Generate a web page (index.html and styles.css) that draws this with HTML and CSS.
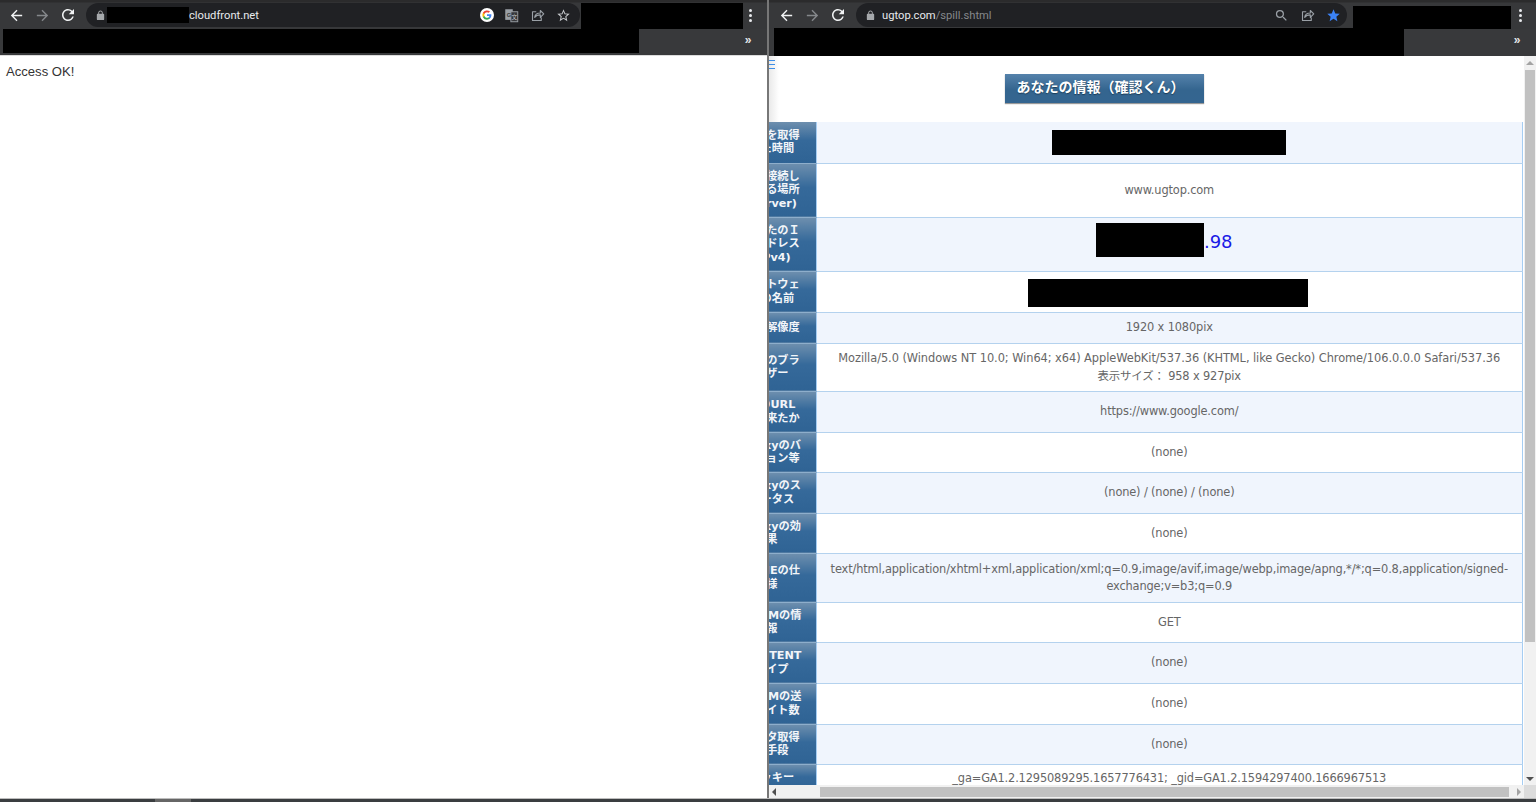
FILE: index.html
```html
<!DOCTYPE html>
<html lang="ja">
<head>
<meta charset="utf-8">
<title>Access check</title>
<link rel="stylesheet" href="styles.css">
</head>
<body>
<svg class="sprite" aria-hidden="true">
  <defs>
    <symbol id="i-back" viewBox="0 0 24 24"><path d="M20 11H7.83l5.59-5.59L12 4l-8 8 8 8 1.41-1.41L7.83 13H20v-2z"/></symbol>
    <symbol id="i-fwd" viewBox="0 0 24 24"><path d="M4 11h12.17l-5.59-5.59L12 4l8 8-8 8-1.41-1.41L16.17 13H4v-2z"/></symbol>
    <symbol id="i-reload" viewBox="0 0 24 24"><path d="M17.65 6.35A7.958 7.958 0 0 0 12 4c-4.42 0-7.99 3.58-7.99 8s3.57 8 7.99 8c3.73 0 6.84-2.55 7.73-6h-2.08A5.99 5.99 0 0 1 12 18c-3.31 0-6-2.69-6-6s2.69-6 6-6c1.66 0 3.14.69 4.22 1.78L13 11h7V4l-2.35 2.35z"/></symbol>
    <symbol id="i-lock" viewBox="0 0 24 24"><path d="M18 8h-1V6c0-2.76-2.24-5-5-5S7 3.24 7 6v2H6c-1.1 0-2 .9-2 2v10c0 1.1.9 2 2 2h12c1.1 0 2-.9 2-2V10c0-1.1-.9-2-2-2zM9 6c0-1.66 1.34-3 3-3s3 1.34 3 3v2H9V6z"/></symbol>
    <symbol id="i-star" viewBox="0 0 24 24"><path d="M22 9.24l-7.19-.62L12 2 9.19 8.63 2 9.24l5.46 4.73L5.82 21 12 17.27 18.18 21l-1.63-7.03L22 9.24zM12 15.4l-3.76 2.27 1-4.28-3.32-2.88 4.38-.38L12 6.1l1.71 4.04 4.38.38-3.32 2.88 1 4.28L12 15.4z"/></symbol>
    <symbol id="i-starfill" viewBox="0 0 24 24"><path d="M12 17.27 18.18 21l-1.63-7.03L22 9.24l-7.19-.62L12 2 9.19 8.63 2 9.24l5.46 4.73L5.82 21z"/></symbol>
    <symbol id="i-search" viewBox="0 0 24 24"><path d="M15.5 14h-.79l-.28-.27A6.47 6.47 0 0 0 16 9.5 6.5 6.5 0 1 0 9.5 16c1.61 0 3.09-.59 4.23-1.57l.27.28v.79l5 4.99L20.49 19l-4.99-5zm-6 0C7.01 14 5 11.99 5 9.5S7.01 5 9.5 5 14 7.01 14 9.5 11.99 14 9.5 14z"/></symbol>
    <symbol id="i-share" viewBox="0 0 24 24"><path class="line" d="M10 6H4v14h14v-5M7.5 15c.5-4.5 4-7 9-7V4l5.500 5.500-5.500 5.500v-4c-4 0-7 1-9 4z"/></symbol>
    <symbol id="i-google" viewBox="0 0 24 24">
      <circle cx="12" cy="12" r="12" fill="#fff"/>
      <path d="M19.500 12.200c0-.6-.05-1.100-.15-1.600H12v3h4.200a3.600 3.600 0 0 1-1.550 2.350v2h2.500c1.500-1.350 2.350-3.400 2.350-5.750z" fill="#4285f4"/>
      <path d="M12 20c2.100 0 3.850-.7 5.150-1.900l-2.500-2c-.7.500-1.600.75-2.650.75-2 0-3.750-1.350-4.350-3.200H5v2A8 8 0 0 0 12 20z" fill="#34a853"/>
      <path d="M7.650 13.650a4.800 4.800 0 0 1 0-3.300v-2H5a8 8 0 0 0 0 7.300z" fill="#fbbc05"/>
      <path d="M12 7.150c1.150 0 2.150.4 2.950 1.150l2.200-2.200A8 8 0 0 0 5 8.350l2.650 2c.6-1.850 2.350-3.200 4.350-3.200z" fill="#ea4335"/>
    </symbol>
    <symbol id="i-translate" viewBox="0 0 24 24">
      <rect x="2" y="2" width="12" height="17" fill="#9aa0a6"/>
      <rect x="11" y="6" width="11" height="16" fill="#35363a" stroke="#9aa0a6" stroke-width="1.500"/>
      <text x="8" y="14" class="tr-a">G</text>
      <text x="16.500" y="18" class="tr-b">文</text>
    </symbol>
  </defs>
</svg>

<div class="desktop">
  <section class="window window-left">
    <header class="chrome">
      <div class="toolbar">
        <span class="btn"><svg class="ico"><use href="#i-back"/></svg></span>
        <span class="btn dim"><svg class="ico"><use href="#i-fwd"/></svg></span>
        <span class="btn"><svg class="ico ico-reload"><use href="#i-reload"/></svg></span>
        <div class="omnibox omnibox-left">
          <svg class="lock"><use href="#i-lock"/></svg>
          <span class="redact redact-host"></span>
          <span class="url">cloudfront.net</span>
          <span class="omni-icons">
            <svg class="act act-g"><use href="#i-google"/></svg>
            <svg class="act"><use href="#i-translate"/></svg>
            <svg class="act act-grey"><use href="#i-share"/></svg>
            <svg class="act act-light"><use href="#i-star"/></svg>
          </span>
        </div>
        <span class="redact redact-ext-left"></span>
        <span class="kebab"><i></i><i></i><i></i></span>
      </div>
      <div class="bookmarks bookmarks-left">
        <span class="redact redact-marks-left"></span>
        <span class="chev">»</span>
      </div>
    </header>
    <main class="page-left">Access OK!</main>
  </section>

  <div class="divider"></div>

  <section class="window window-right">
    <header class="chrome">
      <div class="toolbar toolbar-right">
        <span class="btn"><svg class="ico"><use href="#i-back"/></svg></span>
        <span class="btn dim"><svg class="ico"><use href="#i-fwd"/></svg></span>
        <span class="btn"><svg class="ico ico-reload"><use href="#i-reload"/></svg></span>
        <div class="omnibox omnibox-right">
          <svg class="lock"><use href="#i-lock"/></svg>
          <span class="url url-right">ugtop.com<span class="url-path">/spill.shtml</span></span>
          <span class="omni-icons omni-icons-right">
            <svg class="act act-grey-fill"><use href="#i-search"/></svg>
            <svg class="act act-grey"><use href="#i-share"/></svg>
            <svg class="act act-blue"><use href="#i-starfill"/></svg>
          </span>
        </div>
        <span class="redact redact-ext-right"></span>
        <span class="kebab kebab-right"><i></i><i></i><i></i></span>
      </div>
      <div class="bookmarks bookmarks-right">
        <span class="redact redact-marks-right"></span>
        <span class="chev">»</span>
      </div>
    </header>

    <div class="viewport">
      <div class="scroller">
        <span class="menu-stub"></span>
        <div class="content">
          <h1 class="title">あなたの情報（確認くん）</h1>
          <table class="info">
            <tbody>
              <tr class="h41 alt"><th>情報を取得<br>した時間</th><td><span class="redact redact-time"></span></td></tr>
              <tr class="h54"><th>現在接続し<br>ている場所<br>(server)</th><td>www.ugtop.com</td></tr>
              <tr class="h54 alt"><th>あなたのＩ<br>Ｐアドレス<br>(IPv4)</th><td class="ip-cell"><span class="redact redact-ip"></span><span class="ip">.98</span></td></tr>
              <tr class="h41"><th>ソフトウェ<br>アの名前</th><td><span class="redact redact-host-name"></span></td></tr>
              <tr class="h31 alt"><th>画面解像度</th><td>1920 x 1080pix</td></tr>
              <tr class="h48"><th>貴方のブラ<br>ウザー</th><td><span class="ua">Mozilla/5.0 (Windows NT 10.0; Win64; x64) AppleWebKit/537.36 (KHTML, like Gecko) Chrome/106.0.0.0 Safari/537.36</span><br>表示サイズ： 958 x 927pix</td></tr>
              <tr class="h41 alt"><th>どのURL<br>から来たか</th><td>https://www.google.com/</td></tr>
              <tr class="h40"><th>Proxyのバ<br>ージョン等</th><td>(none)</td></tr>
              <tr class="h41 alt"><th>Proxyのス<br>テータス</th><td>(none) / (none) / (none)</td></tr>
              <tr class="h40"><th>Proxyの効<br>果</th><td>(none)</td></tr>
              <tr class="h49 alt"><th>MIMEの仕<br>様</th><td>text/html,application/xhtml+xml,application/xml;q=0.9,image/avif,image/webp,image/apng,*/*;q=0.8,application/signed-exchange;v=b3;q=0.9</td></tr>
              <tr class="h40"><th>FORMの情<br>報</th><td>GET</td></tr>
              <tr class="h41 alt"><th>CONTENT<br>タイプ</th><td>(none)</td></tr>
              <tr class="h41"><th>FORMの送<br>信バイト数</th><td>(none)</td></tr>
              <tr class="h40 alt"><th>データ取得<br>の手段</th><td>(none)</td></tr>
              <tr class="h28"><th>クッキー</th><td>_ga=GA1.2.1295089295.1657776431; _gid=GA1.2.1594297400.1666967513</td></tr>
            </tbody>
          </table>
        </div>
      </div>
      <div class="vbar">
        <span class="arrow arrow-up"></span>
        <span class="vthumb"></span>
        <span class="arrow arrow-down"></span>
      </div>
      <div class="hbar">
        <span class="arrow arrow-left"></span>
        <span class="hthumb"></span>
        <span class="arrow arrow-right"></span>
      </div>
      <div class="corner"></div>
    </div>
  </section>
</div>

<footer class="taskbar"><span class="task-thumb"></span></footer>
</body>
</html>
```
FILE: styles.css
```css
* { box-sizing: border-box; }
html, body { margin: 0; padding: 0; height: 100%; overflow: hidden; }
body {
  width: 1536px;
  height: 802px;
  display: flex;
  flex-direction: column;
  background: #fff;
  font-family: "DejaVu Sans", "Noto Sans CJK JP", sans-serif;
}
.sprite { width: 0; height: 0; position: absolute; }
.line { fill: none; stroke: currentColor; stroke-width: 1.8; stroke-linejoin: round; }
.tr-a { font: bold 9px "Liberation Sans", sans-serif; fill: #35363a; text-anchor: middle; }
.tr-b { font: 9px "Noto Sans CJK SC", sans-serif; fill: #c4c7ca; text-anchor: middle; }

.desktop { flex: 1; min-height: 0; display: flex; }
.window { display: flex; flex-direction: column; min-width: 0; }
.window-left { width: 767px; }
.window-right { width: 767px; }
.divider { width: 2px; background: #777; }
.taskbar {
  height: 4px;
  background: #3a3d40;
  border-top: 1px solid #bdbdbd;
  display: flex;
  padding-left: 155px;
}
.task-thumb { width: 36px; background: #666; }

.chrome { height: 56px; flex: none; background: #38393b; display: flex; flex-direction: column; }
.toolbar {
  height: 29px;
  display: flex;
  align-items: flex-start;
  padding: 3px 0 0 3px;
  background: linear-gradient(#2b2b2c 0, #2b2b2c 2px, #37383a 3px);
}
.toolbar-right { padding-left: 4px; }
.btn { width: 26px; height: 24px; display: flex; align-items: center; justify-content: center; color: #f1f3f4; }
.btn.dim { color: #85888b; }
.ico { width: 17px; height: 17px; fill: currentColor; }
.ico-reload { width: 18px; height: 18px; }

.omnibox {
  height: 24px;
  margin-left: 5px;
  border-radius: 12px;
  background: #202124;
  display: flex;
  align-items: center;
  padding-left: 9px;
  color: #e8eaed;
}
.omnibox-left { width: 494px; }
.omnibox-right { width: 491px; }
.lock { width: 11px; height: 11px; fill: #a5a8ab; flex: none; }
.redact { background: #000; display: block; flex: none; }
.redact-host { width: 82px; height: 16px; margin-left: 1px; }
.url { font: 11.2px Roboto, sans-serif; color: #e8eaed; white-space: nowrap; }
.url-right { margin-left: 6px; }
.url-path { color: #85888b; }
.omni-icons { margin-left: auto; display: flex; align-items: center; gap: 11px; padding-right: 9px; }
.omni-icons-right { padding-right: 6px; }
.act { width: 15px; height: 15px; color: #9aa0a6; fill: #9aa0a6; }
.act-g { width: 14px; height: 14px; margin-right: -1px; margin-left: 1px; }
.act-light { fill: #c6c9cc; }
.act-blue { fill: #3b82f6; }

.redact-ext-left { width: 162px; height: 26px; margin-left: 1px; }
.redact-ext-right { width: 158px; height: 23px; margin: 3px 0 0 6px; }
.kebab { width: 14px; height: 24px; display: flex; flex-direction: column; align-items: center; justify-content: center; gap: 2px; }
.kebab-right { margin-left: 2px; }
.kebab i { width: 3px; height: 3px; border-radius: 50%; background: #e8eaed; display: block; flex: none; }

.bookmarks { flex: 1; display: flex; align-items: flex-start; }
.bookmarks-left { padding-left: 3px; border-bottom: 1px solid #dcdcdc; }
.bookmarks-right { padding-left: 5px; }
.redact-marks-left { width: 636px; height: 24px; }
.redact-marks-right { width: 630px; height: 28px; margin-top: -1px; }
.chev { margin-left: auto; width: 38px; text-align: center; color: #e3e5e8; font: bold 12px "Liberation Sans", sans-serif; line-height: 22px; }

.page-left {
  flex: 1;
  padding: 7px 6px;
  font: 13.1px/17px "Liberation Sans", sans-serif;
  color: #333;
  background: #fff;
}

.viewport {
  flex: 1;
  min-height: 0;
  display: grid;
  grid-template-columns: 1fr 12px;
  grid-template-rows: 1fr 13px;
  background: #fff;
}
.scroller { overflow: hidden; position: relative; min-width: 0; min-height: 0; }
.scroller::before {
  content: "";
  position: absolute;
  left: 0; top: 0; bottom: 0;
  width: 10px;
  background: linear-gradient(to right, #e4e4e4, #fff);
  opacity: .8;
}
.menu-stub {
  position: absolute;
  left: 0; top: 4px;
  width: 6px; height: 9px;
  background: repeating-linear-gradient(#3f8fe8 0, #3f8fe8 1px, transparent 1px, transparent 4px);
}
.content { width: 799px; margin-left: -45px; padding-top: 18px; position: relative; }
.title {
  width: 199px;
  height: 29px;
  margin: 0 0 19px 281px;
  padding-right: 8px;
  font: bold 14px/25px "Noto Sans CJK JP", sans-serif;
  color: #fff;
  text-align: center;
  background: linear-gradient(#5582ab, #34658f 55%, #346590);
  box-shadow: 0 1px 1px #999;
  text-shadow: 0 1px 1px #1c3c58;
}
.info { border-collapse: collapse; table-layout: fixed; width: 799px; }
.info th {
  width: 92px;
  padding: 0 0 0 4px;
  font: bold 11.2px/13.5px "DejaVu Sans", "Noto Sans CJK JP", sans-serif;
  color: #f2f5f9;
  text-align: center;
  background: linear-gradient(#6e8fae, #35699a 45%, #2f6394);
  border-bottom: 1px solid #8eaecb;
  white-space: nowrap;
}
.info td {
  padding: 1px 8px 0;
  font: 11.4px/17.5px "DejaVu Sans", "Noto Sans CJK JP", sans-serif;
  letter-spacing: -.15px;
  color: #666;
  text-align: center;
  vertical-align: middle;
  background: #fff;
  border-bottom: 1px solid #b4d2ee;
  border-left: 1px solid #a6cdf2;
  border-right: 1px solid #a6cdf2;
}
.info tr.alt td { background: #f0f5fd; }
.info td.ip-cell { padding-top: 0; padding-bottom: 4px; }
.ua { letter-spacing: -.06px; }
.h28 { height: 28px; }
.h31 { height: 31px; }
.h40 { height: 40px; }
.h41 { height: 41px; }
.h48 { height: 48px; }
.h49 { height: 49px; }
.h54 { height: 54px; }
.redact-time { width: 234px; height: 25px; margin: 0 auto; }
.redact-ip { display: inline-block; width: 108px; height: 34px; vertical-align: middle; margin-bottom: 4px; }
.ip { font-size: 18px; color: #1a1ae6; margin-right: 10px; vertical-align: middle; letter-spacing: 0; }
.redact-host-name { width: 280px; height: 28px; margin: 1px auto 0; transform: translateX(-1px); }

.vbar { background: #f1f1f1; display: flex; flex-direction: column; align-items: center; padding: 14px 1px 0; position: relative; }
.vthumb { width: 10px; height: 572px; background: #c1c1c1; flex: none; }
.hbar { background: #f1f1f1; display: flex; align-items: center; padding-left: 51px; position: relative; }
.hthumb { width: 689px; height: 10px; background: #c1c1c1; flex: none; }
.corner { background: #dcdcdc; }
.arrow { position: absolute; width: 0; height: 0; }
.arrow-up { top: 5px; left: 2px; border: 4px solid transparent; border-top: 0; border-bottom: 4px solid #a3a3a3; }
.arrow-down { bottom: 4px; left: 2px; border: 4px solid transparent; border-bottom: 0; border-top: 4px solid #505050; }
.arrow-left { left: 3px; top: 3px; border: 4px solid transparent; border-left: 0; border-right: 4px solid #505050; }
.arrow-right { right: 3px; top: 3px; border: 4px solid transparent; border-right: 0; border-left: 4px solid #a3a3a3; }
```
